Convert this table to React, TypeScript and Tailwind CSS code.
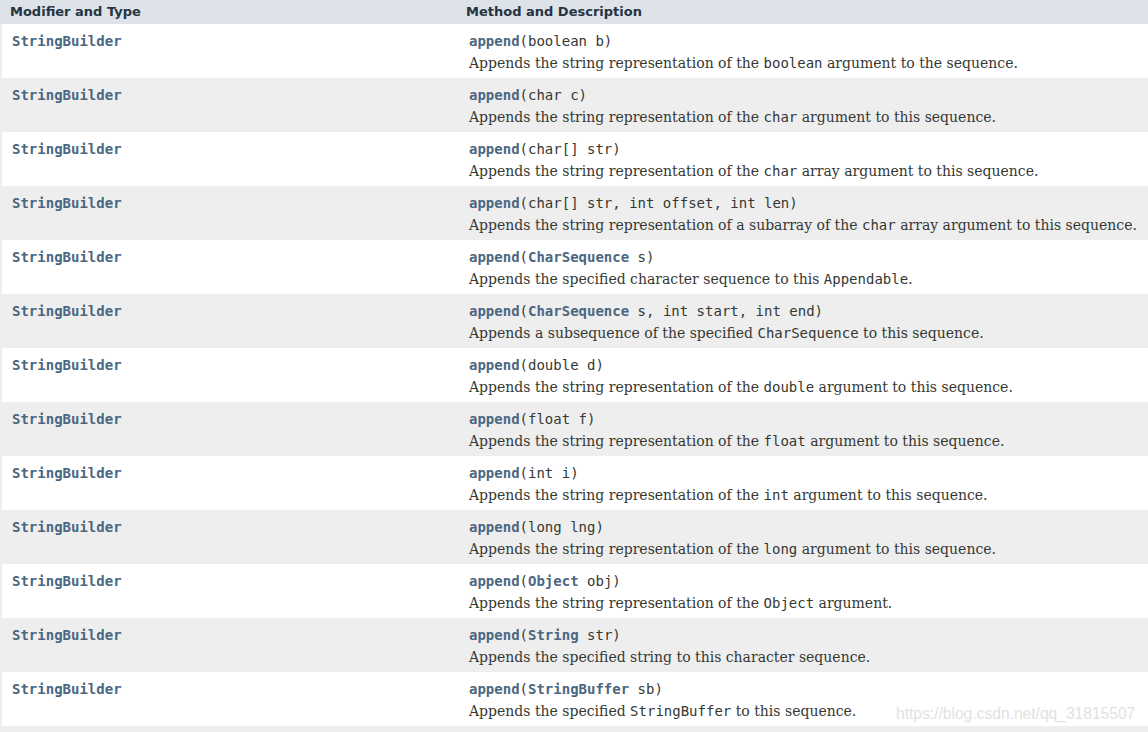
import React from "react";

type Row = { params: React.ReactNode; desc: React.ReactNode };

const mono = "font-['DejaVu_Sans_Mono',monospace]";
const T = ({ children }: { children: React.ReactNode }) => (
  <span className="font-bold text-[#4A6782]">{children}</span>
);
const C = ({ children }: { children: React.ReactNode }) => (
  <span className={mono}>{children}</span>
);

const rows: Row[] = [
  { params: <>(boolean b)</>, desc: <>Appends the string representation of the <C>boolean</C> argument to the sequence.</> },
  { params: <>(char c)</>, desc: <>Appends the string representation of the <C>char</C> argument to this sequence.</> },
  { params: <>(char[] str)</>, desc: <>Appends the string representation of the <C>char</C> array argument to this sequence.</> },
  { params: <>(char[] str, int offset, int len)</>, desc: <>Appends the string representation of a subarray of the <C>char</C> array argument to this sequence.</> },
  { params: <>(<T>CharSequence</T> s)</>, desc: <>Appends the specified character sequence to this <C>Appendable</C>.</> },
  { params: <>(<T>CharSequence</T> s, int start, int end)</>, desc: <>Appends a subsequence of the specified <C>CharSequence</C> to this sequence.</> },
  { params: <>(double d)</>, desc: <>Appends the string representation of the <C>double</C> argument to this sequence.</> },
  { params: <>(float f)</>, desc: <>Appends the string representation of the <C>float</C> argument to this sequence.</> },
  { params: <>(int i)</>, desc: <>Appends the string representation of the <C>int</C> argument to this sequence.</> },
  { params: <>(long lng)</>, desc: <>Appends the string representation of the <C>long</C> argument to this sequence.</> },
  { params: <>(<T>Object</T> obj)</>, desc: <>Appends the string representation of the <C>Object</C> argument.</> },
  { params: <>(<T>String</T> str)</>, desc: <>Appends the specified string to this character sequence.</> },
  { params: <>(<T>StringBuffer</T> sb)</>, desc: <>Appends the specified <C>StringBuffer</C> to this sequence.</> },
];

export default function App() {
  return (
    <div className="relative w-[1148px] h-[732px] overflow-hidden bg-[#eeeeee] text-[#353833]">
      <div className="grid grid-cols-[459px_1fr] h-[24px] bg-[#dee3e9] text-[13px] font-bold text-[#253441] font-['DejaVu_Sans',sans-serif] leading-[24px]">
        <div className="pl-[10px]">Modifier and Type</div>
        <div className="pl-[7px]">Method and Description</div>
      </div>
      {rows.map((r, i) => (
        <div
          key={i}
          className={`grid grid-cols-[457px_1fr] ml-[2px] h-[54px] ${i % 2 === 0 ? "bg-white" : "bg-[#eeeeee]"}`}
        >
          <div className={`pl-[10px] pt-[8px] leading-[19px] text-[14px] font-bold text-[#4A6782] ${mono}`}>
            StringBuilder
          </div>
          <div className="pl-[10px] pt-[8px] whitespace-nowrap">
            <div className={`leading-[19px] text-[14px] ${mono}`}>
              <span className="font-bold text-[#4A6782]">append</span>
              {r.params}
            </div>
            <div className="leading-[24px] text-[14px] font-['DejaVu_Serif',serif]">{r.desc}</div>
          </div>
        </div>
      ))}
      <div className="absolute left-[896px] top-[703px] text-[15.6px] leading-[22px] text-[#e2e2e2] font-['Liberation_Sans',Arial,sans-serif] whitespace-nowrap">
        https://blog.csdn.net/qq_31815507
      </div>
    </div>
  );
}
